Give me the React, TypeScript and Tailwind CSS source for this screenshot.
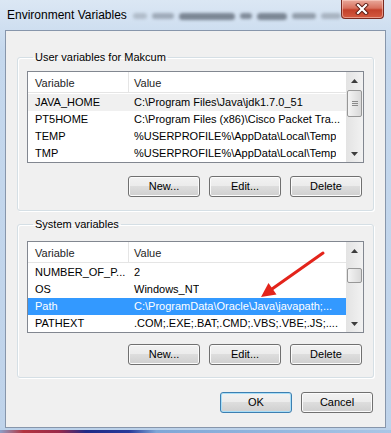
import React from 'react';

type Row = { name: string; value: string; state?: 'selected' | 'inactive' };

const userVars: Row[] = [
  { name: 'JAVA_HOME', value: 'C:\\Program Files\\Java\\jdk1.7.0_51', state: 'inactive' },
  { name: 'PT5HOME', value: 'C:\\Program Files (x86)\\Cisco Packet Tra...' },
  { name: 'TEMP', value: '%USERPROFILE%\\AppData\\Local\\Temp' },
  { name: 'TMP', value: '%USERPROFILE%\\AppData\\Local\\Temp' },
];

const systemVars: Row[] = [
  { name: 'NUMBER_OF_P...', value: '2' },
  { name: 'OS', value: 'Windows_NT' },
  { name: 'Path', value: 'C:\\ProgramData\\Oracle\\Java\\javapath;...', state: 'selected' },
  { name: 'PATHEXT', value: '.COM;.EXE;.BAT;.CMD;.VBS;.VBE;.JS;....' },
];

const WinButton = ({ label, isDefault = false }: { label: string; isDefault?: boolean }) => (
  <button
    className={`w-[72px] h-[21px] rounded-[3px] border text-[11px] leading-none text-black bg-[linear-gradient(#f2f2f2,#ebebeb_50%,#dddddd_50%,#cfcfcf)] ${
      isDefault
        ? 'border-[#3c7fb1] shadow-[inset_0_0_0_1px_#a9def7]'
        : 'border-[#707070] shadow-[inset_0_0_0_1px_#fbfbfb]'
    }`}
  >
    {label}
  </button>
);

const ScrollBar = ({ thumbTop, thumbHeight, grip }: { thumbTop: number; thumbHeight: number; grip: boolean }) => (
  <div className="w-[17px] flex flex-col bg-[linear-gradient(to_right,#e3e3e3,#f2f2f2)]">
    <div className="h-[17px] flex items-center justify-center">
      <svg width="7" height="4" viewBox="0 0 7 4">
        <path d="M3.5 0 L7 4 L0 4 Z" fill="#3d3d3d" />
      </svg>
    </div>
    <div className="flex-1 px-[1px]">
      <div
        className="rounded-[2px] border border-[#979797] bg-[linear-gradient(to_right,#f4f4f4,#e6e6e6_50%,#d9d9d9)] flex flex-col items-center justify-center gap-[1px]"
        style={{ marginTop: thumbTop, height: thumbHeight }}
      >
        {grip && (
          <>
            <div className="w-[6px] h-[1px] bg-[#8a8a8a]" />
            <div className="w-[6px] h-[1px] bg-[#8a8a8a]" />
            <div className="w-[6px] h-[1px] bg-[#8a8a8a]" />
          </>
        )}
      </div>
    </div>
    <div className="h-[17px] flex items-center justify-center">
      <svg width="7" height="4" viewBox="0 0 7 4">
        <path d="M0 0 L7 0 L3.5 4 Z" fill="#3d3d3d" />
      </svg>
    </div>
  </div>
);

const VarList = ({ rows, thumbTop, thumbHeight, grip }: { rows: Row[]; thumbTop: number; thumbHeight: number; grip: boolean }) => (
  <div className="h-[92px] border border-[#828790] bg-white flex">
    <div className="flex-1 flex flex-col overflow-hidden">
      <div className="h-[22px] pt-[3px] flex items-center border-b border-[#e5e5e5] text-[#1e1e1e]">
        <div className="w-[100px] pl-[7px]">Variable</div>
        <div className="w-[1px] -mt-[3px] self-stretch bg-[#e5e5e5]" />
        <div className="pl-[5px]">Value</div>
      </div>
      <div className="pt-[1px]">
        {rows.map((r) => (
          <div
            key={r.name}
            className={`h-[17px] flex items-center whitespace-nowrap ${
              r.state === 'selected' ? 'bg-[#3399ff] text-white' : r.state === 'inactive' ? 'bg-[#f0f0f0] text-black' : 'text-black'
            }`}
          >
            <div className="w-[101px] pl-[7px] overflow-hidden">{r.name}</div>
            <div className="pl-[5px] overflow-hidden">{r.value}</div>
          </div>
        ))}
      </div>
    </div>
    <ScrollBar thumbTop={thumbTop} thumbHeight={thumbHeight} grip={grip} />
  </div>
);

const Group = ({ title, children, className }: { title: string; children: React.ReactNode; className: string }) => (
  <fieldset
    className={`border border-[#d5dfe5] rounded-[3px] shadow-[inset_1px_1px_0_#ffffff,1px_1px_0_#ffffff] px-[9px] ${className}`}
  >
    <legend className="ml-[6px] px-[2px] leading-[13px] text-black">{title}</legend>
    {children}
  </fieldset>
);

export default function App() {
  return (
    <div className="relative w-[391px] h-[433px] overflow-hidden flex flex-col bg-[linear-gradient(#dbe7f4,#c5d8ed_12%,#bfd3ea)] font-['Liberation_Sans',Arial,sans-serif] text-[11px]">
      {/* title bar */}
      <div className="h-[30px] flex">
        <div className="self-center pl-[7px] pb-[1px] text-[12px] text-black whitespace-nowrap">Environment Variables</div>
        {/* blurred window behind the glass */}
        <div className="self-center ml-[6px] mt-[2px] flex items-center gap-[5px] blur-[1.5px]">
          <div className="w-[14px] h-[6px] rounded-full bg-[#8d97a3] opacity-50" />
          <div className="w-[22px] h-[6px] rounded-full bg-[#7c8692] opacity-60" />
          <div className="w-[56px] h-[7px] rounded-full bg-[#56606c] opacity-70" />
          <div className="w-[12px] h-[6px] rounded-full bg-[#5d6773] opacity-70" />
          <div className="w-[30px] h-[7px] rounded-full bg-[#56606c] opacity-70" />
          <div className="w-[24px] h-[6px] rounded-full bg-[#66707c] opacity-60" />
          <div className="w-[20px] h-[6px] rounded-full bg-[#7c8692] opacity-50" />
        </div>
        <div className="ml-auto mr-[7px] w-[46px] h-[19px] rounded-b-[4px] border border-t-0 border-[#7a2a20] bg-[linear-gradient(#e9a99b,#d8715e_45%,#c3412b_55%,#d45a40)] flex items-center justify-center shadow-[inset_0_0_0_1px_rgba(255,220,210,0.5)]">
          <svg width="14" height="12" viewBox="0 0 14 12">
            <path d="M3 2 L11 10 M11 2 L3 10" stroke="#5a1a12" strokeWidth="4" strokeLinecap="square" />
            <path d="M3 2 L11 10 M11 2 L3 10" stroke="#ffffff" strokeWidth="2.2" strokeLinecap="square" />
          </svg>
        </div>
      </div>

      {/* client area */}
      <div className="mx-[5px] h-[398px] border border-[#8796ab] bg-[#f0f0f0] px-[11px] flex flex-col">
        <Group title="User variables for Makcum" className="mt-[20px] pt-[7px] pb-[13px]">
          <VarList rows={userVars} thumbTop={1} thumbHeight={27} grip />
          <div className="mt-[13px] pr-[2px] flex justify-end gap-[9px]">
            <WinButton label="New..." />
            <WinButton label="Edit..." />
            <WinButton label="Delete" />
          </div>
        </Group>

        <Group title="System variables" className="mt-[7px] pt-[10px] pb-[12px]">
          <VarList rows={systemVars} thumbTop={9} thumbHeight={15} grip={false} />
          <div className="mt-[11px] pr-[2px] flex justify-end gap-[9px]">
            <WinButton label="New..." />
            <WinButton label="Edit..." />
            <WinButton label="Delete" />
          </div>
        </Group>

        <div className="mt-[14px] mr-[1px] flex justify-end gap-[9px]">
          <WinButton label="OK" isDefault />
          <WinButton label="Cancel" />
        </div>
      </div>

      {/* desktop wallpaper below the window */}
      <div className="flex-1 flex flex-col">
        <div className="h-[2px] bg-[#bcd2ea]" />
        <div className="flex-1 bg-[linear-gradient(to_right,#8c9fc8,#b2343f_6%,#9a2a4a_15%,#1f2a86_22%,#283a9a_33%,#7ea6d6_40%,#a9c6e6)]" />
      </div>

      {/* red annotation arrow */}
      <svg className="absolute left-0 top-0 pointer-events-none" width="391" height="433" viewBox="0 0 391 433">
        <line x1="323" y1="253" x2="272" y2="289" stroke="#e3241b" strokeWidth="3" strokeLinecap="round" />
        <polygon points="261,297 276.5,294.5 268.5,283" fill="#e3241b" />
      </svg>
    </div>
  );
}
